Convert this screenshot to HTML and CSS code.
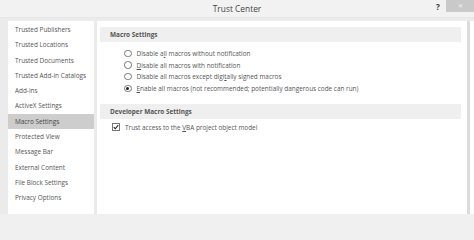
FILE: index.html
```html
<!DOCTYPE html>
<html>
<head>
<meta charset="utf-8">
<link rel="stylesheet" href="styles.css">
</head>
<body>
<div class="window">
  <div class="titlebar">
    <div class="title">Trust Center</div>
    <div class="help">?</div>
    <div class="close">&#x2715;</div>
  </div>
  <div class="body">
    <div class="nav">
      <div class="item">Trusted Publishers</div>
      <div class="item">Trusted Locations</div>
      <div class="item">Trusted Documents</div>
      <div class="item">Trusted Add-in Catalogs</div>
      <div class="item">Add-ins</div>
      <div class="item">ActiveX Settings</div>
      <div class="item active">Macro Settings</div>
      <div class="item">Protected View</div>
      <div class="item">Message Bar</div>
      <div class="item">External Content</div>
      <div class="item">File Block Settings</div>
      <div class="item">Privacy Options</div>
    </div>
    <div class="main">
      <div class="content">
        <div class="header">Macro Settings</div>
        <div class="options first">
          <div class="opt"><span class="radio"></span><span>Disable a<u>l</u>l macros without notification</span></div>
          <div class="opt"><span class="radio"></span><span><u>D</u>isable all macros with notification</span></div>
          <div class="opt"><span class="radio"></span><span>Disable all macros except digi<u>t</u>ally signed macros</span></div>
          <div class="opt"><span class="radio checked"></span><span><u>E</u>nable all macros (not recommended; potentially dangerous code can run)</span></div>
        </div>
        <div class="header">Developer Macro Settings</div>
        <div class="options second">
          <div class="opt check-opt"><span class="checkbox"><svg viewBox="0 0 8 8" width="6" height="6"><path d="M1 4.2 L3 6.3 L7 1.5" fill="none" stroke="#222" stroke-width="1.4"/></svg></span><span>Trust access to the <u>V</u>BA project object model</span></div>
        </div>
      </div>
      <div class="scroll"></div>
    </div>
  </div>
</div>
</body>
</html>
```
FILE: styles.css
```css
html, body {
  margin: 0;
  padding: 0;
}
body {
  width: 474px;
  height: 214px;
  overflow: hidden;
  background: #f0f0f0;
  font-family: "Open Sans", "Noto Sans", sans-serif;
  color: #444;
}
.window {
  display: flex;
  flex-direction: column;
  height: 214px;
}
.titlebar {
  position: relative;
  height: 17px;
  background: #f2f2f2;
  border-bottom: 1px solid #e6e6e6;
  display: flex;
  align-items: center;
  justify-content: center;
}
.title {
  font-size: 8.4px;
  color: #444;
}
.help {
  position: absolute;
  left: 436px;
  top: 1px;
  font-size: 8px;
  font-weight: bold;
  color: #333;
}
.close {
  position: absolute;
  right: 0;
  top: 0;
  width: 28px;
  height: 12px;
  background: #c9c9c9;
  color: #f4f4f4;
  font-size: 6px;
  display: flex;
  align-items: center;
  justify-content: center;
}
.body {
  flex: 1;
  display: flex;
  padding: 3px 0 0 8px;
  gap: 3px;
  background: #ebebeb;
}
.nav {
  width: 86px;
  background: #fff;
  padding-top: 1px;
  display: flex;
  flex-direction: column;
}
.item {
  height: 15.3px;
  line-height: 15.3px;
  padding-left: 7px;
  font-size: 6.4px;
  color: #555;
  white-space: nowrap;
}
.item.active {
  background: #cdcdcd;
  color: #444;
}
.main {
  flex: 1;
  display: flex;
  background: #fff;
}
.content {
  flex: 1;
  padding: 6px 6px 0 3px;
}
.header {
  height: 15px;
  line-height: 15px;
  background: #efefef;
  padding-left: 10px;
  font-size: 6.4px;
  font-weight: bold;
  color: #555;
}
.options {
  padding-left: 24px;
  display: flex;
  flex-direction: column;
}
.options.first {
  padding-top: 5.5px;
  padding-bottom: 10px;
}
.options.second {
  padding-top: 2px;
}
.opt {
  height: 11.7px;
  display: flex;
  align-items: center;
  gap: 5px;
  font-size: 6.4px;
  color: #555;
  white-space: nowrap;
}
.opt u {
  text-decoration-thickness: 0.5px;
  text-underline-offset: 1px;
}
.radio {
  width: 5.5px;
  height: 5.5px;
  border: 0.8px solid #777;
  border-radius: 50%;
  background: #fff;
  display: flex;
  align-items: center;
  justify-content: center;
}
.radio.checked::after {
  content: "";
  width: 3px;
  height: 3px;
  border-radius: 50%;
  background: #222;
}
.check-opt {
  margin-left: -12px;
}
.checkbox {
  width: 6px;
  height: 6px;
  border: 0.8px solid #777;
  background: #fff;
  display: flex;
  align-items: center;
  justify-content: center;
}
.scroll {
  width: 3px;
  margin-right: 4px;
  background: #dcdcdc;
}
```
